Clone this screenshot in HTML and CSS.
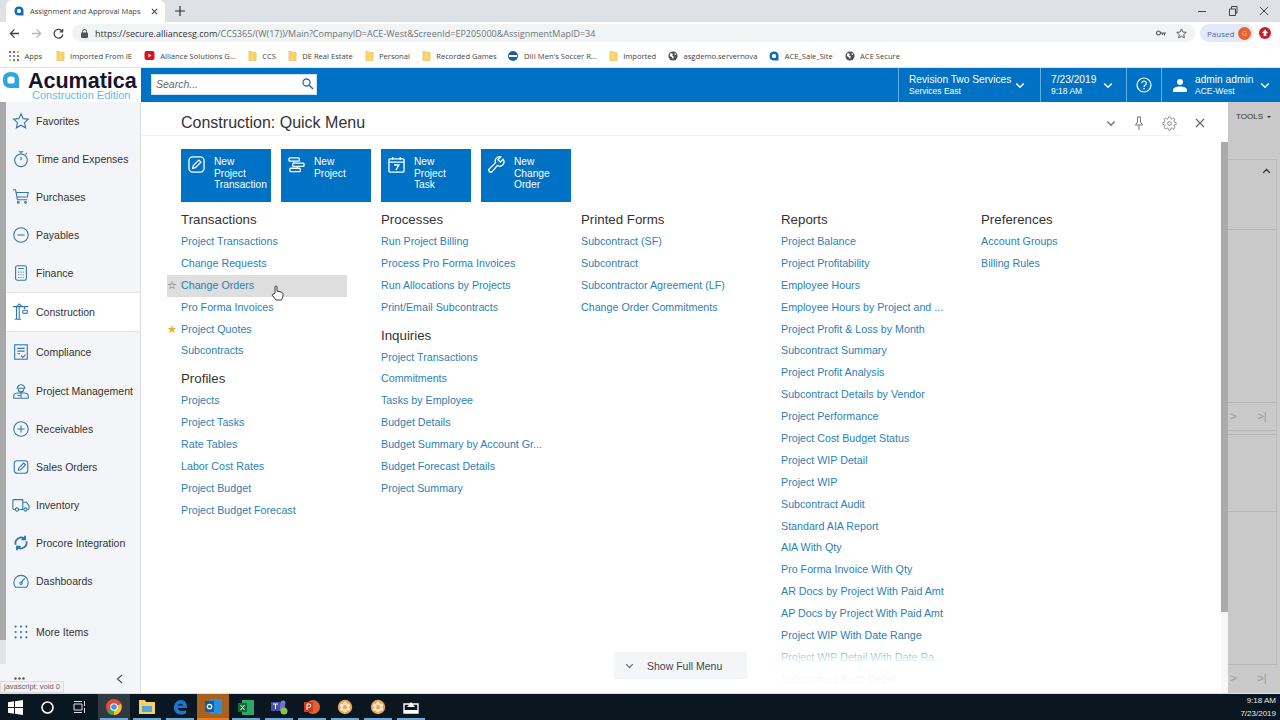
FILE: index.html
```html
<!DOCTYPE html>
<html lang="en">
<head>
  <meta charset="UTF-8" />
  <meta name="viewport" content="width=device-width, initial-scale=1.0" />
  <title>Assignment and Approval Maps</title>
  <link rel="stylesheet" href="styles.css">
</head>
<body>
  <svg class="defs" width="0" height="0">
    <symbol id="folder" viewBox="0 0 10 12"><path d="M1 1h3l1 1h4v9H1z" fill="#fbd46b" stroke="#e3b64a" stroke-width=".6"/></symbol>
    <symbol id="globe" viewBox="0 0 12 12"><circle cx="6" cy="6" r="5.5" fill="#4d5156"/><path d="M3 2.500l3 1-1 2 2 1-1 3-2-2.500-2-1zM8 2l2 2-2 1z" fill="#fff"/></symbol>
    <symbol id="mark" viewBox="0 0 20 20"><path d="M10 1c6 0 9 3 9 9v9h-9c-6 0-9-3-9-9s3-9 9-9z" fill="currentColor"/><rect x="6" y="6" width="8" height="8" rx="3" fill="#fff"/></symbol>
    <symbol id="chev" viewBox="0 0 12 8"><path d="M1.500 1.500L6 6l4.500-4.500" fill="none" stroke="currentColor" stroke-width="1.800"/></symbol>
    <symbol id="hive" viewBox="0 0 20 20"><circle cx="10" cy="10" r="9" fill="#e9a55b"/><circle cx="10" cy="5.500" r="2.300" fill="#fbe6c8"/><circle cx="10" cy="14.500" r="2.300" fill="#fbe6c8"/><circle cx="6" cy="8" r="2.300" fill="#fbe6c8"/><circle cx="14" cy="8" r="2.300" fill="#fbe6c8"/><circle cx="6" cy="12.500" r="2.300" fill="#fbe6c8"/><circle cx="14" cy="12.500" r="2.300" fill="#fbe6c8"/></symbol>
  </svg>

  <div class="tabstrip">
    <div class="tab">
      <svg class="tab-icon" width="10" height="10"><use href="#mark"/></svg>
      <span class="tab-title">Assignment and Approval Maps</span>
      <svg width="7" height="7" viewBox="0 0 8 8"><path d="M1 1l6 6M7 1L1 7" stroke="#444" stroke-width="1.200"/></svg>
    </div>
    <svg class="new-tab" width="10" height="10" viewBox="0 0 10 10"><path d="M5 0v10M0 5h10" stroke="#333" stroke-width="1.200"/></svg>
    <div class="win-buttons">
      <svg width="10" height="10" viewBox="0 0 10 10"><path d="M1 5.500h8" stroke="#444"/></svg>
      <svg width="10" height="10" viewBox="0 0 10 10"><path d="M1.500 3h6v6.500h-6zM3.500 3V.5h5.500v6.500H7.500" fill="none" stroke="#444"/></svg>
      <svg width="10" height="10" viewBox="0 0 10 10"><path d="M1 1l8 8M9 1L1 9" stroke="#444"/></svg>
    </div>
  </div>

  <div class="addressbar">
    <div class="nav-buttons">
      <svg width="11" height="11" viewBox="0 0 12 12"><path d="M11 6H2M6 1.500L1.500 6 6 10.500" fill="none" stroke="#444" stroke-width="1.400"/></svg>
      <svg width="11" height="11" viewBox="0 0 12 12"><path d="M1 6h9M6 1.500L10.500 6 6 10.500" fill="none" stroke="#b5b5b5" stroke-width="1.400"/></svg>
      <svg width="11" height="11" viewBox="0 0 12 12"><path d="M10 3.500A4.800 4.800 0 1 0 10.800 7M10.500 1v3.200H7.300" fill="none" stroke="#444" stroke-width="1.400"/></svg>
    </div>
    <div class="omnibox">
      <svg width="7" height="9" viewBox="0 0 7 9"><path d="M1.500 4V2.500a2 2 0 0 1 4 0V4" fill="none" stroke="#555"/><rect y="3.500" width="7" height="5.500" rx="1" fill="#555"/></svg>
      <span class="url"><b>https://secure.alliancesg.com</b>/CCS365/(W(17))/Main?CompanyID=ACE-West&amp;ScreenId=EP205000&amp;AssignmentMapID=34</span>
      <svg class="omni-key" width="10" height="6" viewBox="0 0 10 6"><circle cx="2.500" cy="3" r="2" fill="none" stroke="#555" stroke-width="1.200"/><path d="M4.500 3H10M8.500 3v2.500M6.500 3v2" stroke="#555" stroke-width="1.100"/></svg>
      <svg width="11" height="11" viewBox="0 0 12 12"><path d="M6 1l1.500 3.400 3.700.4-2.800 2.400.8 3.600L6 9 2.800 10.800l.8-3.600L.8 4.800l3.700-.4z" fill="none" stroke="#555"/></svg>
    </div>
    <div class="paused"><span>Paused</span><i class="avatar">G</i></div>
    <svg class="update" width="12" height="12" viewBox="0 0 12 12"><circle cx="6" cy="6" r="6" fill="#c8202b"/><path d="M6 2.500L9 6H7.300v3H4.700V6H3z" fill="#fff"/></svg>
  </div>

  <div class="bookmarks">
    <span class="bm apps">
      <svg width="10" height="10" viewBox="0 0 10 10"><g fill="#d34b3c"><rect width="2" height="2"/><rect x="4" width="2" height="2"/></g><rect x="8" width="2" height="2" fill="#e8b631"/><g fill="#4d8ee8"><rect y="4" width="2" height="2"/><rect x="4" y="4" width="2" height="2"/></g><rect x="8" y="4" width="2" height="2" fill="#3ea55c"/><rect y="8" width="2" height="2" fill="#e8b631"/><rect x="4" y="8" width="2" height="2" fill="#3ea55c"/><rect x="8" y="8" width="2" height="2" fill="#d34b3c"/></svg>Apps</span>
    <span class="bm"><svg width="9" height="12"><use href="#folder"/></svg>Imported From IE</span>
    <span class="bm"><svg width="11" height="9" viewBox="0 0 10 9"><rect width="10" height="9" rx="2" fill="#d8141c"/><path d="M4 2.500L7 4.500 4 6.500z" fill="#fff"/></svg>Alliance Solutions G...</span>
    <span class="bm"><svg width="9" height="12"><use href="#folder"/></svg>CCS</span>
    <span class="bm"><svg width="9" height="12"><use href="#folder"/></svg>DE Real Estate</span>
    <span class="bm"><svg width="9" height="12"><use href="#folder"/></svg>Personal</span>
    <span class="bm"><svg width="9" height="12"><use href="#folder"/></svg>Recorded Games</span>
    <span class="bm"><svg width="10" height="10" viewBox="0 0 10 10"><circle cx="5" cy="5" r="5" fill="#1d5f9e"/><rect x="1" y="4" width="8" height="2" fill="#fff"/></svg>DIII Men's Soccer R...</span>
    <span class="bm"><svg width="9" height="12"><use href="#folder"/></svg>Imported</span>
    <span class="bm"><svg width="10" height="10"><use href="#globe"/></svg>asgdemo.servernova</span>
    <span class="bm bm-ace"><svg width="10" height="10"><use href="#mark"/></svg>ACE_Sale_Site</span>
    <span class="bm"><svg width="10" height="10"><use href="#globe"/></svg>ACE Secure</span>
  </div>

  <header class="app-header">
    <div class="logo">
      <svg class="logo-mark" width="18" height="18"><use href="#mark"/></svg>
      <div class="logo-text">
        <div class="logo-name">Acumatica</div>
        <div class="logo-edition">Construction Edition</div>
      </div>
    </div>
    <div class="search">
      <span>Search...</span>
      <svg width="12" height="12" viewBox="0 0 12 12"><circle cx="4.500" cy="4.500" r="3.500" fill="none" stroke="#2a6fa8" stroke-width="1.300"/><path d="M7 7l4 4" stroke="#2a6fa8" stroke-width="1.600"/></svg>
    </div>
    <div class="header-cell company">
      <div><div class="cell-main">Revision Two Services</div><div class="cell-sub">Services East</div></div>
      <svg width="10" height="7"><use href="#chev"/></svg>
    </div>
    <div class="header-cell date">
      <div><div class="cell-main">7/23/2019</div><div class="cell-sub">9:18 AM</div></div>
      <svg width="10" height="7"><use href="#chev"/></svg>
    </div>
    <div class="header-cell help">
      <svg width="16" height="16" viewBox="0 0 16 16"><circle cx="8" cy="8" r="7" fill="none" stroke="#fff" stroke-width="1.200"/><path d="M5.800 6.200a2.200 2.200 0 1 1 3.400 1.900c-.8.500-1.200.9-1.200 1.900" fill="none" stroke="#fff" stroke-width="1.200"/><circle cx="8" cy="11.800" r=".8" fill="#fff"/></svg>
    </div>
    <div class="header-cell user">
      <svg width="14" height="14" viewBox="0 0 14 14"><circle cx="7" cy="4" r="3" fill="#fff"/><path d="M0 14v-2c0-2 3-3.500 7-3.500s7 1.500 7 3.500v2z" fill="#fff"/></svg>
      <div class="user-text"><div class="cell-main">admin admin</div><div class="cell-sub">ACE-West</div></div>
      <svg width="10" height="7"><use href="#chev"/></svg>
    </div>
  </header>

  <div class="main">
    <div class="edge"></div>
    <nav class="sidebar">
      <div class="nav-list">
        <a class="nav-item"><svg class="nav-icon" viewBox="0 0 20 20"><path d="M10 2l2.400 5.400 5.800.6-4.300 3.900 1.200 5.700L10 14.700l-5.100 2.900 1.200-5.700L1.800 8l5.800-.6z"/></svg>Favorites</a>
        <a class="nav-item"><svg class="nav-icon" viewBox="0 0 20 20"><circle cx="10" cy="11.500" r="7"/><path d="M10 4.500V2M7.500 2h5M10 7.500v4M15 5l1.500-1.500"/></svg>Time and Expenses</a>
        <a class="nav-item"><svg class="nav-icon" viewBox="0 0 20 20"><path d="M1 2h3l2 11h11M5 5h13l-1 5H6"/><circle cx="7" cy="16" r="1"/><circle cx="15" cy="16" r="1"/></svg>Purchases</a>
        <a class="nav-item"><svg class="nav-icon" viewBox="0 0 20 20"><circle cx="10" cy="10" r="8"/><path d="M6 10h8"/></svg>Payables</a>
        <a class="nav-item"><svg class="nav-icon" viewBox="0 0 20 20"><rect x="4" y="2" width="12" height="16" rx="2"/><path d="M7 5h6M7 9h1M9.500 9h1M12 9h1M7 12h1M9.500 12h1M12 12h1M7 15h1M9.500 15h1M12 15h1"/></svg>Finance</a>
        <a class="nav-item active"><svg class="nav-icon" viewBox="0 0 20 20"><path d="M1 4h17M5 4v14M8 4v14M3 18h7M5 4l3-3 3 3M14 4v3"/><rect x="12" y="8" width="5" height="3.500" rx="1"/></svg>Construction</a>
        <a class="nav-item short"><svg class="nav-icon" viewBox="0 0 20 20"><rect x="3" y="2" width="14" height="16"/><path d="M6 6h8M6 9h8M6 12h3M10 14l2 2 3-3"/></svg>Compliance</a>
        <a class="nav-item"><svg class="nav-icon" viewBox="0 0 20 20"><path d="M6 7a4 4 0 0 1 8 0M5 7h10M7 8a3 3 0 0 0 6 0M2 18v-3c0-2 3-3 8-3s8 1 8 3v3zM10 12v6M6 15h3"/></svg>Project Management</a>
        <a class="nav-item"><svg class="nav-icon" viewBox="0 0 20 20"><circle cx="10" cy="10" r="8"/><path d="M6 10h8M10 6v8"/></svg>Receivables</a>
        <a class="nav-item"><svg class="nav-icon" viewBox="0 0 20 20"><rect x="2.500" y="3" width="15" height="14" rx="3"/><path d="M7 13.500l.6-2.500 5.400-5.400 2 2-5.400 5.400z"/></svg>Sales Orders</a>
        <a class="nav-item"><svg class="nav-icon" viewBox="0 0 20 20"><path d="M3 15H2a1 1 0 0 1-1-1V5a1 1 0 0 1 1-1h10v11H8M12 7h4l3 4v3a1 1 0 0 1-1 1h-1M12 15h1"/><circle cx="5.500" cy="15" r="1.800"/><circle cx="15" cy="15" r="1.800"/></svg>Inventory</a>
        <a class="nav-item"><svg class="nav-icon thick" viewBox="0 0 20 20"><path d="M4 12a6.500 6.500 0 0 1 10.500-6.500M16 8a6.500 6.500 0 0 1-10.500 6.500M14.500 2v4h-4M5.500 18v-4h4"/></svg>Procore Integration</a>
        <a class="nav-item"><svg class="nav-icon" viewBox="0 0 20 20"><path d="M4 17a8 8 0 1 1 12 0zM10 12l4-5"/><circle cx="10" cy="12.500" r="1.300"/></svg>Dashboards</a>
        <a class="nav-item more"><svg class="nav-icon dots" viewBox="0 0 20 20"><circle cx="4" cy="4" r="1.200"/><circle cx="10" cy="4" r="1.200"/><circle cx="16" cy="4" r="1.200"/><circle cx="4" cy="10" r="1.200"/><circle cx="10" cy="10" r="1.200"/><circle cx="16" cy="10" r="1.200"/><circle cx="4" cy="16" r="1.200"/><circle cx="10" cy="16" r="1.200"/><circle cx="16" cy="16" r="1.200"/></svg>More Items</a>
      </div>
      <div class="nav-footer">
        <svg width="11" height="3" viewBox="0 0 11 3"><g fill="#555"><circle cx="1.500" cy="1.500" r="1.200"/><circle cx="5.500" cy="1.500" r="1.200"/><circle cx="9.500" cy="1.500" r="1.200"/></g></svg>
        <svg width="7" height="10" viewBox="0 0 7 10"><path d="M6 1L1.500 5 6 9" fill="none" stroke="#555" stroke-width="1.200"/></svg>
      </div>
    </nav>

    <section class="panel">
      <div class="panel-head">
        <h2>Construction: Quick Menu</h2>
        <div class="panel-tools">
          <svg width="10" height="7"><use href="#chev"/></svg>
          <svg width="10" height="15" viewBox="0 0 10 15"><path d="M3 1h4M3.500 1v5L1.500 9h7l-2-3V1M5 9v5" fill="none" stroke="#777"/></svg>
          <svg width="15" height="15" viewBox="0 0 24 24" fill="none" stroke="#777" stroke-width="1.400"><circle cx="12" cy="12" r="3"/><path d="M19.400 15a1.650 1.650 0 0 0 .33 1.820l.06.06a2 2 0 0 1 0 2.830 2 2 0 0 1-2.830 0l-.06-.06a1.650 1.650 0 0 0-1.820-.33 1.650 1.650 0 0 0-1 1.510V21a2 2 0 0 1-2 2 2 2 0 0 1-2-2v-.09A1.650 1.650 0 0 0 9 19.400a1.650 1.650 0 0 0-1.820.33l-.06.06a2 2 0 0 1-2.830 0 2 2 0 0 1 0-2.830l.06-.06a1.650 1.650 0 0 0 .33-1.820 1.650 1.650 0 0 0-1.510-1H3a2 2 0 0 1-2-2 2 2 0 0 1 2-2h.09A1.650 1.650 0 0 0 4.600 9a1.650 1.650 0 0 0-.33-1.820l-.06-.06a2 2 0 0 1 0-2.830 2 2 0 0 1 2.830 0l.06.06a1.650 1.650 0 0 0 1.820.33H9a1.650 1.650 0 0 0 1-1.510V3a2 2 0 0 1 2-2 2 2 0 0 1 2 2v.09a1.650 1.650 0 0 0 1 1.510 1.650 1.650 0 0 0 1.820-.33l.06-.06a2 2 0 0 1 2.830 0 2 2 0 0 1 0 2.830l-.06.06a1.650 1.650 0 0 0-.33 1.820V9a1.650 1.650 0 0 0 1.510 1H21a2 2 0 0 1 2 2 2 2 0 0 1-2 2h-.09a1.650 1.650 0 0 0-1.510 1z"/></svg>
          <svg width="10" height="10" viewBox="0 0 10 10"><path d="M1 1l8 8M9 1L1 9" stroke="#666" stroke-width="1.100"/></svg>
        </div>
      </div>
      <div class="panel-body">
        <div class="quick-menu">
          <div class="tiles">
            <a class="tile"><svg viewBox="0 0 18 18"><rect x="1" y="1" width="16" height="16" rx="4"/><path d="M5 13l.6-2.800L11.500 4.300l2.200 2.200L7.800 12.400z"/></svg><span>New<br>Project<br>Transaction</span></a>
            <a class="tile"><svg viewBox="0 0 18 18"><rect x="1" y="2" width="11" height="3.500" rx="1"/><rect x="5" y="7.500" width="12" height="3.500" rx="1"/><rect x="2" y="13" width="11" height="3.500" rx="1"/><path d="M6 5.500v2M10 11v2"/></svg><span>New<br>Project</span></a>
            <a class="tile"><svg viewBox="0 0 18 18"><rect x="1" y="3" width="16" height="14" rx="1"/><path d="M1 6.500h16M5 1v3M13 1v3"/><path class="tile-seven" d="M6.500 9.500h5L8.500 15"/></svg><span>New<br>Project<br>Task</span></a>
            <a class="tile"><svg viewBox="0 0 18 18"><path d="M16 3.500l-3 3-2.500-2.500 3-3a4.500 4.500 0 0 0-5.500 6L1.500 13.500a2 2 0 0 0 3 3L10 10a4.500 4.500 0 0 0 6-6.500z"/></svg><span>New<br>Change<br>Order</span></a>
          </div>

          <div class="columns">
            <div class="column">
              <h3>Transactions</h3>
              <a class="menu-link">Project Transactions</a>
              <a class="menu-link">Change Requests</a>
              <a class="menu-link hovered"><span class="star">☆</span>Change Orders</a>
              <a class="menu-link">Pro Forma Invoices</a>
              <a class="menu-link"><span class="star on">★</span>Project Quotes</a>
              <a class="menu-link">Subcontracts</a>
              <h3 class="next">Profiles</h3>
              <a class="menu-link">Projects</a>
              <a class="menu-link">Project Tasks</a>
              <a class="menu-link">Rate Tables</a>
              <a class="menu-link">Labor Cost Rates</a>
              <a class="menu-link">Project Budget</a>
              <a class="menu-link">Project Budget Forecast</a>
            </div>
            <div class="column">
              <h3>Processes</h3>
              <a class="menu-link">Run Project Billing</a>
              <a class="menu-link">Process Pro Forma Invoices</a>
              <a class="menu-link">Run Allocations by Projects</a>
              <a class="menu-link">Print/Email Subcontracts</a>
              <h3 class="next">Inquiries</h3>
              <a class="menu-link">Project Transactions</a>
              <a class="menu-link">Commitments</a>
              <a class="menu-link">Tasks by Employee</a>
              <a class="menu-link">Budget Details</a>
              <a class="menu-link">Budget Summary by Account Gr...</a>
              <a class="menu-link">Budget Forecast Details</a>
              <a class="menu-link">Project Summary</a>
            </div>
            <div class="column">
              <h3>Printed Forms</h3>
              <a class="menu-link">Subcontract (SF)</a>
              <a class="menu-link">Subcontract</a>
              <a class="menu-link">Subcontractor Agreement (LF)</a>
              <a class="menu-link">Change Order Commitments</a>
            </div>
            <div class="column">
              <h3>Reports</h3>
              <a class="menu-link">Project Balance</a>
              <a class="menu-link">Project Profitability</a>
              <a class="menu-link">Employee Hours</a>
              <a class="menu-link">Employee Hours by Project and ...</a>
              <a class="menu-link">Project Profit &amp; Loss by Month</a>
              <a class="menu-link">Subcontract Summary</a>
              <a class="menu-link">Project Profit Analysis</a>
              <a class="menu-link">Subcontract Details by Vendor</a>
              <a class="menu-link">Project Performance</a>
              <a class="menu-link">Project Cost Budget Status</a>
              <a class="menu-link">Project WIP Detail</a>
              <a class="menu-link">Project WIP</a>
              <a class="menu-link">Subcontract Audit</a>
              <a class="menu-link">Standard AIA Report</a>
              <a class="menu-link">AIA With Qty</a>
              <a class="menu-link">Pro Forma Invoice With Qty</a>
              <a class="menu-link">AR Docs by Project With Paid Amt</a>
              <a class="menu-link">AP Docs by Project With Paid Amt</a>
              <a class="menu-link">Project WIP With Date Range</a>
              <a class="menu-link">Project WIP Detail With Date Ra...</a>
              <a class="menu-link">Subcontract Audit Detail</a>
            </div>
            <div class="column">
              <h3>Preferences</h3>
              <a class="menu-link">Account Groups</a>
              <a class="menu-link">Billing Rules</a>
            </div>
          </div>
          <div class="fade"></div>
          <div class="full-menu">
            <svg width="9" height="6"><use href="#chev"/></svg>
            Show Full Menu
          </div>
        </div>
        <div class="panel-scroll"><div class="panel-thumb"></div></div>
      </div>
    </section>

    <aside class="backdrop">
      <div class="tools">TOOLS <i class="caret"></i></div>
      <div class="bd-box bd-collapse"><svg width="9" height="6" viewBox="0 0 12 8"><path d="M1.500 6.500L6 2l4.500 4.500" fill="none" stroke="#333" stroke-width="1.800"/></svg></div>
      <div class="bd-box bd-mid"></div>
      <div class="bd-box bd-pager">&gt;<span>&gt;|</span></div>
      <div class="bd-box bd-gap"></div>
      <div class="bd-box bd-plain"></div>
      <div class="bd-box bd-tall"></div>
      <div class="bd-pager">&gt;<span>&gt;|</span></div>
    </aside>

    <svg class="hand" width="13" height="16" viewBox="0 0 13 16"><path d="M4 8V2a1 1 0 0 1 2 0v4l4 1c1.500.4 2 1 2 2.500 0 2-.5 3.500-1.500 5.500H5L1.500 10.500C.8 9.500 2 8.500 3 9.200z" fill="#fff" stroke="#222" stroke-width=".9"/></svg>
    <div class="status-tip">javascript: void 0</div>
  </div>

  <footer class="taskbar">
    <svg class="task win" width="15" height="15" viewBox="0 0 15 15"><path d="M0 2.200l6-.9V7H0zM7 1.200L15 0v7H7zM0 8h6v5.700l-6-.9zM7 8h8v7l-8-1.200z" fill="#fff"/></svg>
    <svg class="task" width="13" height="13" viewBox="0 0 13 13"><circle cx="6.500" cy="6.500" r="5.500" fill="none" stroke="#fff" stroke-width="1.600"/></svg>
    <svg class="task last" width="13" height="12" viewBox="0 0 13 12"><path d="M1 3h8v6H1zM1 .5h8M1 11.500h8M11.500 0v5M11.500 7v5" fill="none" stroke="#ddd"/></svg>
    <span class="task-slot chrome running"><svg width="16" height="16" viewBox="0 0 16 16"><circle cx="8" cy="8" r="8" fill="#dd4b3a"/><path d="M8 8L1 12a8 8 0 0 0 7 4z" fill="#3aa655"/><path d="M8 8l7-3a8 8 0 0 1-7 11z" fill="#f2c230"/><circle cx="8" cy="8" r="3.800" fill="#fff"/><circle cx="8" cy="8" r="2.800" fill="#4a8ee8"/></svg></span>
    <span class="task-slot running"><svg width="16" height="14" viewBox="0 0 16 14"><path d="M0 0h6l1 2h9v12H0z" fill="#f5cf6a"/><rect x="3" y="6" width="10" height="6" fill="#4fa8d8"/></svg></span>
    <span class="task-slot running"><svg width="15" height="15" viewBox="0 0 15 15"><path d="M1 8C1 3 4 0 8 0c4 0 6 3 6 8H5c0 3 4 4 8 2v3.500c-5 2.500-12 1-12-5.500zM5 5.500h5C10 3 5 3 5 5.500z" fill="#1976d2"/></svg></span>
    <span class="task-slot outlook"><svg width="17" height="15" viewBox="0 0 17 15"><rect x="5" width="12" height="15" fill="#2a8fdc"/><rect width="9" height="11" y="2" fill="#0f5fa8"/><circle cx="4.500" cy="7.500" r="2.200" fill="none" stroke="#fff" stroke-width="1.300"/></svg></span>
    <span class="task-slot running"><svg width="16" height="15" viewBox="0 0 16 15"><rect x="4" width="12" height="15" fill="#2ea866"/><rect y="3" width="9" height="9" fill="#136b3a"/><path d="M2.500 5l4 5M6.500 5l-4 5" stroke="#fff"/></svg></span>
    <span class="task-slot running"><svg width="17" height="16" viewBox="0 0 17 16"><circle cx="12" cy="4" r="2.500" fill="#7b83d8"/><rect x="7" y="4" width="7" height="8" rx="1" fill="#6a72c8"/><rect y="3" width="9" height="9" fill="#474fa8"/><path d="M2 5h5M4.500 5v5" stroke="#fff"/><circle cx="13" cy="12" r="3.500" fill="#8bc34a"/></svg></span>
    <span class="task-slot running"><svg width="16" height="16" viewBox="0 0 16 16"><circle cx="9" cy="8" r="7" fill="#e0603a"/><rect y="3" width="9" height="10" fill="#c43e1c"/><path d="M3 11V5h2a1.500 1.500 0 0 1 0 3.500H3" fill="none" stroke="#fff"/></svg></span>
    <span class="task-slot running"><svg width="16" height="16"><use href="#hive"/></svg></span>
    <span class="task-slot running"><svg width="16" height="16"><use href="#hive"/></svg></span>
    <span class="task-slot running"><svg width="16" height="14" viewBox="0 0 16 14"><path d="M1 4h14v9H1z" fill="none" stroke="#fff" stroke-width="1.400"/><path d="M4 7l4-5 4 5z" fill="#fff"/><rect x="1" y="10" width="14" height="3" fill="#fff"/></svg></span>
    <div class="clock">9:18 AM<br>7/23/2019</div>
  </footer>
</body>
</html>
```

FILE: styles.css
```css
* {
  box-sizing: border-box;
}
html, body {
  margin: 0;
  height: 720px;
  overflow: hidden;
}
body {
  display: flex;
  flex-direction: column;
  font-family: 'Liberation Sans', Arial, sans-serif;
  background: #fff;
  color: #333;
}
.defs {
  position: absolute;
}
svg {
  display: block;
  flex: none;
}
h2, h3 {
  margin: 0;
  font-weight: normal;
}

/* browser chrome */
.tabstrip {
  height: 22px;
  flex: none;
  background: #dee1e6;
  display: flex;
  align-items: center;
  font-family: 'Open Sans', sans-serif;
}
.tab {
  width: 159px;
  height: 22px;
  margin-left: 6px;
  padding: 0 7px 0 8px;
  background: #fff;
  border-radius: 6px 6px 0 0;
  display: flex;
  align-items: center;
  font-size: 7.500px;
  color: #444;
}
.tab-icon {
  color: #0f6cb5;
}
.tab-title {
  margin-left: 6px;
  flex: 1;
  white-space: nowrap;
}
.new-tab {
  margin-left: 10px;
}
.win-buttons {
  margin-left: auto;
  display: flex;
  gap: 21px;
  padding-right: 11px;
}
.addressbar {
  height: 22px;
  flex: none;
  display: flex;
  align-items: center;
  padding-left: 9px;
  background: #fff;
  font-family: 'Open Sans', sans-serif;
}
.nav-buttons {
  display: flex;
  gap: 11px;
  width: 63px;
}
.omnibox {
  width: 1123px;
  height: 18px;
  background: #f1f3f4;
  border-radius: 9px;
  display: flex;
  align-items: center;
  padding: 0 8px 0 9px;
  gap: 7px;
}
.url {
  font-size: 9px;
  color: #70757a;
  white-space: nowrap;
  margin-right: auto;
}
.url b {
  font-weight: normal;
  color: #333;
}
.omni-key {
  margin-right: 3px;
}
.paused {
  width: 54px;
  height: 18px;
  margin-left: 5px;
  background: #e3e9f8;
  border-radius: 9px;
  display: flex;
  align-items: center;
  justify-content: space-between;
  padding: 0 3px 0 7px;
  font-size: 8px;
  color: #4a6a9c;
}
.avatar {
  width: 13px;
  height: 13px;
  border-radius: 50%;
  background: #e8622a;
  color: #f5c5a8;
  font-style: normal;
  font-size: 7px;
  text-align: center;
  line-height: 13px;
}
.update {
  margin-left: 5px;
}
.bookmarks {
  height: 24px;
  flex: none;
  display: flex;
  align-items: center;
  gap: 11.800px;
  padding-left: 9px;
  background: #fff;
  border-bottom: 1px solid #e4e4e4;
  font-family: 'Open Sans', sans-serif;
  font-size: 7.600px;
  color: #444;
}
.bm {
  display: flex;
  align-items: center;
  gap: 5.500px;
  white-space: nowrap;
}
.bm.apps {
  margin-right: 1.500px;
}
.bm-ace svg {
  color: #0f6cb5;
}

/* app header */
.app-header {
  height: 34px;
  flex: none;
  display: flex;
  background: #0072c6;
  color: #fff;
}
.logo {
  width: 141px;
  background: #fff;
  display: flex;
  padding-left: 2px;
}
.logo-mark {
  color: #2aa8de;
  margin: 3px 8px 0 0;
}
.logo-text {
  margin-top: 3px;
}
.logo-name {
  font-size: 21.500px;
  font-weight: bold;
  line-height: 20px;
  color: #15152b;
  white-space: nowrap;
}
.logo-edition {
  font-size: 11px;
  line-height: 8px;
  color: #63bbdd;
  margin-left: 4px;
  white-space: nowrap;
}
.search {
  width: 166px;
  height: 21px;
  margin: 6px auto 0 10px;
  background: #fff;
  border: 1px solid #cfe3f3;
  display: flex;
  align-items: center;
  justify-content: space-between;
  padding: 0 2px 1px 4px;
  font-size: 10.500px;
  font-style: italic;
  color: #666;
}
.header-cell {
  display: flex;
  align-items: center;
  border-left: 1px solid #62ade0;
}
.company {
  width: 142px;
  padding: 0 15px 0 10px;
  justify-content: space-between;
}
.date {
  width: 86px;
  padding: 0 13px 0 10px;
  justify-content: space-between;
}
.help {
  width: 35px;
  justify-content: center;
}
.user {
  width: 119px;
  padding: 0 10px 0 11px;
}
.user-text {
  margin: 0 auto 0 8px;
}
.cell-main {
  font-size: 10.200px;
  line-height: 13px;
  white-space: nowrap;
}
.cell-sub {
  font-size: 8.500px;
  line-height: 11px;
  white-space: nowrap;
}

/* main area */
.main {
  height: 592px;
  flex: none;
  display: flex;
  position: relative;
  border-bottom: 1px solid #ddd;
}
.edge {
  width: 6px;
  background: linear-gradient(#a9a9a9 0, #a9a9a9 538px, #e2e3e6 538px, #e2e3e6 562px, #f4f5f8 562px);
}
.sidebar {
  width: 135px;
  background: #f4f5f8;
  border-right: 1px solid #dcdde0;
  display: flex;
  flex-direction: column;
  overflow: hidden;
}
.nav-list {
  height: 562px;
  overflow: hidden;
  flex: none;
}
.nav-item {
  height: 38px;
  display: flex;
  align-items: center;
  padding-left: 6px;
  font-size: 10.500px;
  color: #333;
  white-space: nowrap;
}
.nav-item.active {
  height: 40px;
  background: #fff;
  border-top: 1px solid #e3e4e7;
  border-bottom: 1px solid #e3e4e7;
}
.nav-item.short {
  height: 40px;
}
.nav-item.more {
  margin-top: 13px;
}
.nav-icon {
  width: 18px;
  height: 18px;
  margin-right: 6px;
  fill: none;
  stroke: #2f77ad;
  stroke-width: 1.200;
}
.nav-icon.thick {
  stroke-width: 2;
}
.nav-icon.dots {
  fill: #2f77ad;
  stroke: none;
}
.nav-footer {
  flex: 1;
  display: flex;
  align-items: center;
  justify-content: space-between;
  padding: 0 17px 0 8px;
}

/* quick menu panel */
.panel {
  flex: 1;
  display: flex;
  flex-direction: column;
  min-width: 0;
}
.panel-head {
  height: 40px;
  flex: none;
  display: flex;
  align-items: center;
  padding: 2px 23px 0 40px;
  background: #fff;
  position: relative;
}
.panel-head::after {
  content: "";
  position: absolute;
  left: 0;
  width: 1040px;
  top: 33px;
  height: 1px;
  background: #f3f3f3;
}
.panel-head h2 {
  font-size: 16px;
  color: #333;
}
.panel-tools {
  margin-left: auto;
  display: flex;
  align-items: center;
  gap: 18px;
  color: #777;
}
.panel-body {
  flex: 1;
  display: flex;
  min-height: 0;
}
.quick-menu {
  flex: 1;
  position: relative;
  overflow: hidden;
  padding: 7px 0 0 40px;
}
.tiles {
  display: flex;
  gap: 10px;
}
.tile {
  width: 90px;
  height: 53px;
  background: #0072c6;
  color: #fff;
  display: flex;
  gap: 9px;
  padding: 7px 4px 0 7px;
  font-size: 10.200px;
  line-height: 11.500px;
  white-space: nowrap;
}
.tile svg {
  width: 17px;
  height: 17px;
  fill: none;
  stroke: #fff;
  stroke-width: 1.400;
}
.columns {
  display: grid;
  grid-template-columns: repeat(5, 200px);
  margin-top: 6px;
}
.column h3 {
  height: 23px;
  line-height: 23px;
  font-size: 13.300px;
  color: #333;
}
.column h3.next {
  margin-top: 5px;
}
.menu-link {
  display: block;
  height: 21.900px;
  line-height: 21.900px;
  font-size: 10.700px;
  color: #2d7fb5;
  white-space: nowrap;
  position: relative;
}
.menu-link.hovered {
  width: 180px;
  margin-left: -14px;
  padding-left: 14px;
  background: #dedede;
}
.star {
  position: absolute;
  left: -14px;
  font-size: 11px;
  color: #555;
}
.hovered .star {
  left: 0;
}
.star.on {
  color: #f2b01e;
}
.fade {
  position: absolute;
  left: 0;
  right: 0;
  bottom: 0;
  height: 48px;
  background: linear-gradient(rgba(255, 255, 255, 0), rgba(255, 255, 255, 0.8) 30%, rgba(255, 255, 255, 0.95) 70%);
}
.full-menu {
  position: absolute;
  left: 473px;
  bottom: 14px;
  width: 133px;
  height: 27px;
  background: #f4f5f8;
  display: flex;
  align-items: center;
  gap: 13px;
  padding-left: 11px;
  font-size: 10.500px;
  color: #444;
}
.full-menu svg {
  color: #777;
}
.panel-scroll {
  width: 7px;
  flex: none;
  background: #f7f7f7;
}
.panel-thumb {
  height: 470px;
  background: #ababab;
}

/* dimmed page behind the panel */
.backdrop {
  width: 52px;
  background: #c9c9c9;
  display: flex;
  flex-direction: column;
  font-size: 8px;
  color: #333;
}
.tools {
  height: 58px;
  padding: 10px 0 0 8px;
  white-space: nowrap;
}
.caret {
  display: inline-block;
  border: 2.500px solid transparent;
  border-top-color: #333;
  border-bottom: 0;
  vertical-align: middle;
  margin-left: 2px;
}
.bd-box {
  border-bottom: 1px solid #b7b7b7;
  border-right: 1px solid #bcbcbc;
  margin-right: 3px;
  flex: none;
}
.bd-collapse {
  height: 71px;
  border-top: 1px solid #bcbcbc;
  padding: 8px 0 0 34px;
}
.bd-mid {
  height: 173px;
}
.bd-pager {
  height: 28px;
  padding: 7px 0 0 2px;
  color: #9a9a9a;
  font-size: 11px;
}
.bd-pager span {
  margin-left: 21px;
}
.bd-gap {
  height: 4px;
}
.bd-plain {
  height: 77px;
}
.bd-tall {
  height: 153px;
}

/* things lying over the page */
.hand {
  position: absolute;
  left: 271px;
  top: 183px;
}
.status-tip {
  position: absolute;
  left: 0;
  bottom: 0;
  height: 12px;
  padding: 0 3px;
  background: #f2f2f2;
  border: 1px solid #dcdcdc;
  font-size: 7.500px;
  line-height: 10px;
  color: #666;
}

/* windows taskbar */
.taskbar {
  flex: 1;
  display: flex;
  align-items: center;
  background: #0a1720;
  color: #e8e8e8;
  padding-left: 8px;
}
.task {
  margin-right: 19px;
}
.task.win {
  margin-right: 18px;
}
.task.last {
  margin-right: 12px;
}
.task-slot {
  width: 32px;
  height: 26px;
  margin-right: 1px;
  display: flex;
  align-items: center;
  justify-content: center;
  position: relative;
}
.task-slot.running::after {
  content: "";
  position: absolute;
  left: 2px;
  right: 2px;
  bottom: 0;
  height: 2px;
  background: #6ea8d8;
}
.chrome {
  background: #30393f;
}
.outlook {
  background: #a8611f;
  border-bottom: 2px solid #e87c1e;
}
.clock {
  margin-left: auto;
  padding-right: 4px;
  text-align: right;
  font-size: 8px;
  line-height: 13px;
}
```
